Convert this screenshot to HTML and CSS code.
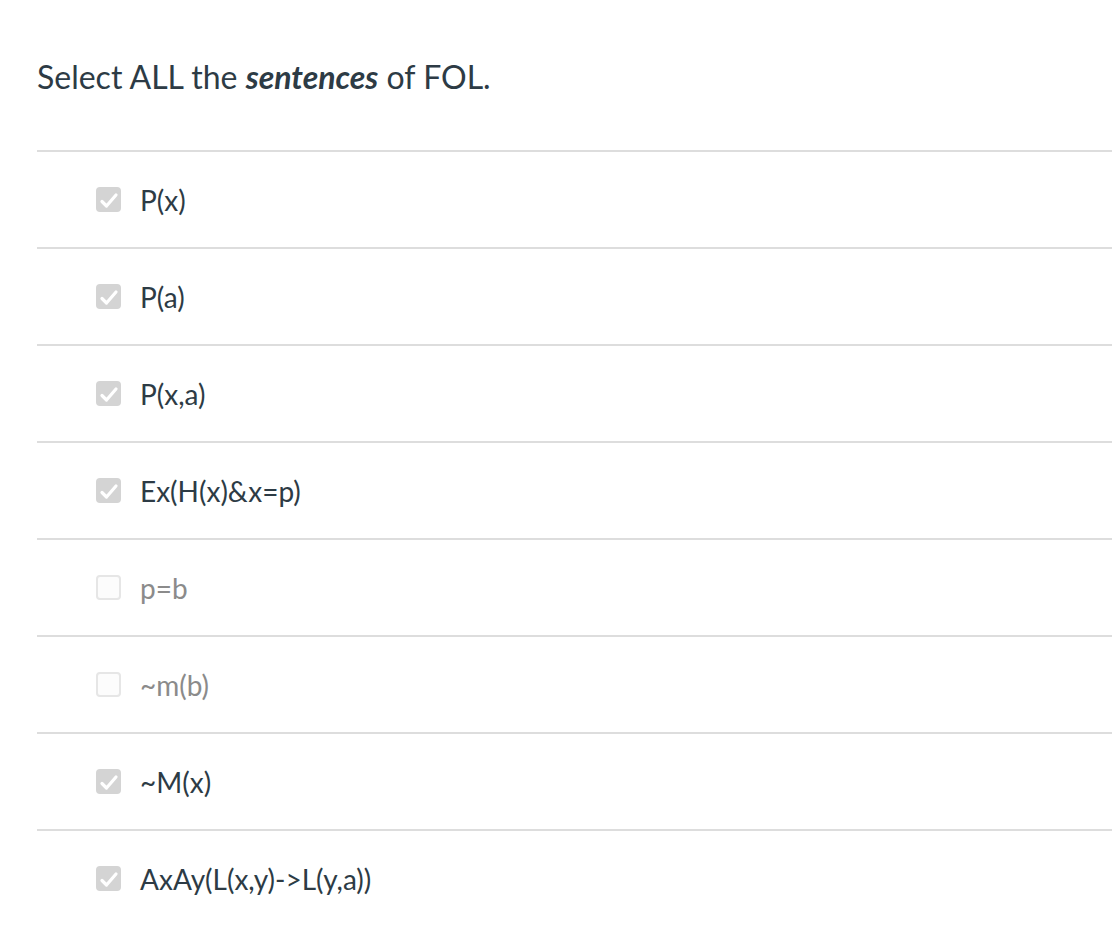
FILE: index.html
```html
<!DOCTYPE html>
<html lang="en">
<head>
<meta charset="utf-8">
<title>Quiz question</title>
<link rel="stylesheet" href="styles.css">
</head>
<body>
<div class="question">
  <p class="prompt">Select ALL the <strong><em>sentences</em></strong> of FOL.</p>
  <ul class="answers">
    <li class="answer checked"><span class="box"><svg viewBox="0 0 25 25" width="25" height="25"><path d="M6 14.5 L10.5 19 L20 8" fill="none" stroke="#fff" stroke-width="3.2" stroke-linecap="round" stroke-linejoin="round"/></svg></span><span class="label">P(x)</span></li>
    <li class="answer checked"><span class="box"><svg viewBox="0 0 25 25" width="25" height="25"><path d="M6 14.5 L10.5 19 L20 8" fill="none" stroke="#fff" stroke-width="3.2" stroke-linecap="round" stroke-linejoin="round"/></svg></span><span class="label">P(a)</span></li>
    <li class="answer checked"><span class="box"><svg viewBox="0 0 25 25" width="25" height="25"><path d="M6 14.5 L10.5 19 L20 8" fill="none" stroke="#fff" stroke-width="3.2" stroke-linecap="round" stroke-linejoin="round"/></svg></span><span class="label">P(x,a)</span></li>
    <li class="answer checked"><span class="box"><svg viewBox="0 0 25 25" width="25" height="25"><path d="M6 14.5 L10.5 19 L20 8" fill="none" stroke="#fff" stroke-width="3.2" stroke-linecap="round" stroke-linejoin="round"/></svg></span><span class="label">Ex(H(x)&amp;x=p)</span></li>
    <li class="answer"><span class="box"></span><span class="label">p=b</span></li>
    <li class="answer"><span class="box"></span><span class="label">~m(b)</span></li>
    <li class="answer checked"><span class="box"><svg viewBox="0 0 25 25" width="25" height="25"><path d="M6 14.5 L10.5 19 L20 8" fill="none" stroke="#fff" stroke-width="3.2" stroke-linecap="round" stroke-linejoin="round"/></svg></span><span class="label">~M(x)</span></li>
    <li class="answer checked"><span class="box"><svg viewBox="0 0 25 25" width="25" height="25"><path d="M6 14.5 L10.5 19 L20 8" fill="none" stroke="#fff" stroke-width="3.2" stroke-linecap="round" stroke-linejoin="round"/></svg></span><span class="label">AxAy(L(x,y)-&gt;L(y,a))</span></li>
  </ul>
</div>
</body>
</html>
```
FILE: styles.css
```css
html, body {
  margin: 0;
  padding: 0;
  background: #fff;
}
body {
  font-family: Lato, "Open Sans", sans-serif;
  color: #2d3b45;
}
.question {
  padding: 56px 0 0 37px;
}
.prompt {
  margin: 0 0 52px 0;
  font-size: 32px;
  line-height: 42px;
}
.prompt strong {
  font-weight: 700;
}
.answers {
  list-style: none;
  margin: 0;
  padding: 0;
}
.answer {
  display: flex;
  align-items: center;
  gap: 19px;
  height: 95px;
  border-top: 2px solid #dddddd;
  padding-left: 59px;
}
.box {
  flex: none;
  width: 25px;
  height: 25px;
  box-sizing: border-box;
  border-radius: 4px;
  border: 2px solid #e6e6e6;
  background: #fcfcfc;
  display: flex;
  align-items: center;
  justify-content: center;
}
.answer.checked .box {
  border: none;
  background: #d4d4d4;
}
.label {
  font-size: 28px;
  line-height: 34px;
  color: #8b8b8b;
}
.answer.checked .label {
  color: #2d3b45;
}
```
